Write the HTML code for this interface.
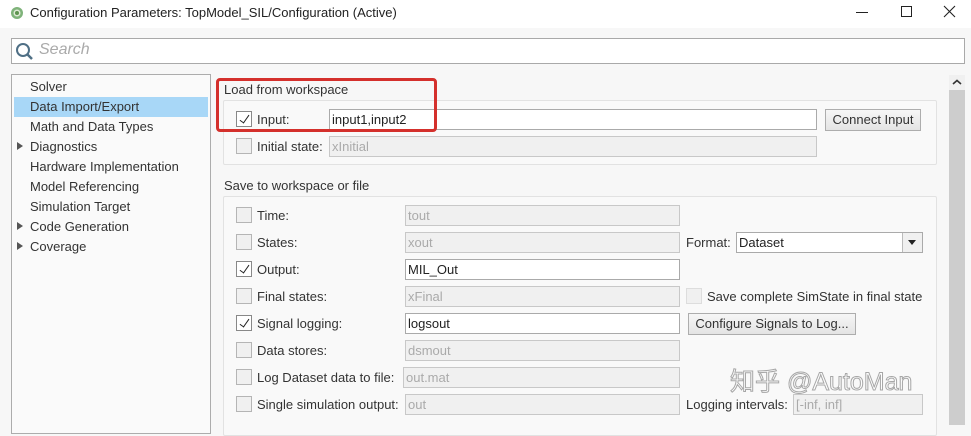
<!DOCTYPE html>
<html><head><meta charset="utf-8"><style>
*{box-sizing:border-box;margin:0;padding:0}
body{width:971px;height:422px;overflow:hidden;background:#f7f7f7;font-family:"Liberation Sans","Noto Sans CJK SC",sans-serif;font-size:13px;color:#333;position:relative}
.a{position:absolute;white-space:nowrap}
.t{position:absolute;white-space:nowrap;line-height:16px}
.cb{position:absolute;width:16px;height:16px;border:1px solid #b5b5b5;background:#f0f0f0}
.cb.on{background:#fff;border-color:#888}
.cb.on:after{content:"";position:absolute;left:5px;top:1px;width:4px;height:9px;border:solid #222;border-width:0 1.5px 1.5px 0;transform:rotate(35deg)}
.f{position:absolute;height:21px;border:1px solid #c8c8c8;background:#f0f0f0;color:#aaa;padding:2px 2px;line-height:15px}
.f.on{background:#fff;border-color:#aaa;color:#222}
.btn{position:absolute;height:22px;border:1px solid #adadad;background:linear-gradient(#f6f6f6,#e4e4e4);line-height:20px;text-align:center;color:#333}
.grp{position:absolute;border:1px solid #e2e2e2;border-radius:2px;background:#f9f9f9}
.li{position:absolute;left:30px;line-height:16px}
.ar{position:absolute;left:17px;width:0;height:0;border-left:6px solid #555;border-top:4px solid transparent;border-bottom:4px solid transparent}
</style></head><body>
<div class="a" style="left:0;top:0;width:971px;height:28px;background:#fff"></div>
<svg class="a" style="left:10px;top:6px" width="14" height="14" viewBox="0 0 14 14"><circle cx="7" cy="7" r="6" fill="#7fb37a"/><circle cx="7" cy="7" r="3.5" fill="#dfe9d6"/><circle cx="7" cy="7" r="2" fill="#5e944f"/></svg>
<div class="t" style="left:30px;top:5px;font-size:13px;color:#222">Configuration Parameters: TopModel_SIL/Configuration (Active)</div>
<div class="a" style="left:856px;top:12px;width:12px;height:1px;background:#222"></div>
<div class="a" style="left:901px;top:6px;width:11px;height:11px;border:1px solid #222"></div>
<svg class="a" style="left:943px;top:5px" width="13" height="13"><path d="M1 1L12 12M12 1L1 12" stroke="#222" stroke-width="1.1"/></svg>

<div class="a" style="left:11px;top:38px;width:954px;height:26px;border:1px solid #a9a9a9;background:#fff"></div>
<svg class="a" style="left:15px;top:42px" width="20" height="20"><circle cx="8" cy="8" r="6" fill="none" stroke="#4f6f85" stroke-width="2"/><path d="M12.5 12.5L17 17" stroke="#4f6f85" stroke-width="2.5"/></svg>
<div class="t" style="left:39px;top:41px;font-size:16px;font-style:italic;color:#aaa;line-height:18px">Search</div>

<div class="a" style="left:11px;top:74px;width:200px;height:360px;border:1px solid #acacac;background:#fafafa"></div>
<div class="a" style="left:14px;top:97px;width:194px;height:20px;background:#a8d7f7"></div>
<div class="li" style="top:79px">Solver</div>
<div class="li" style="top:99px">Data Import/Export</div>
<div class="li" style="top:119px">Math and Data Types</div>
<div class="ar" style="top:142px"></div><div class="li" style="top:139px">Diagnostics</div>
<div class="li" style="top:159px">Hardware Implementation</div>
<div class="li" style="top:179px">Model Referencing</div>
<div class="li" style="top:199px">Simulation Target</div>
<div class="ar" style="top:222px"></div><div class="li" style="top:219px">Code Generation</div>
<div class="ar" style="top:242px"></div><div class="li" style="top:239px">Coverage</div>

<div class="a" style="left:949px;top:75px;width:16px;height:350px;background:#cdcdcd"></div>
<div class="a" style="left:949px;top:75px;width:16px;height:15px;background:#f0f0f0"></div>
<svg class="a" style="left:952px;top:79px" width="10" height="7"><path d="M1 5L5 1.5L9 5" stroke="#333" stroke-width="1.6" fill="none"/></svg>

<div class="t" style="left:224px;top:82px">Load from workspace</div>
<div class="grp" style="left:223px;top:100px;width:714px;height:65px"></div>
<div class="cb on" style="left:236px;top:111px"></div><div class="t" style="left:257px;top:112px">Input:</div>
<div class="f on" style="left:329px;top:109px;width:488px">input1,input2</div>
<div class="btn" style="left:825px;top:109px;width:96px">Connect Input</div>
<div class="cb" style="left:236px;top:138px"></div><div class="t" style="left:257px;top:139px">Initial state:</div>
<div class="f" style="left:329px;top:136px;width:488px">xInitial</div>
<div class="a" style="left:216px;top:78px;width:221px;height:54px;border:3px solid #d4302c;border-radius:4px"></div>

<div class="t" style="left:224px;top:178px">Save to workspace or file</div>
<div class="grp" style="left:223px;top:196px;width:714px;height:240px"></div>

<div class="cb" style="left:236px;top:207px"></div><div class="t" style="left:257px;top:208px">Time:</div><div class="f" style="left:405px;top:205px;width:275px">tout</div>
<div class="cb" style="left:236px;top:234px"></div><div class="t" style="left:257px;top:235px">States:</div><div class="f" style="left:405px;top:232px;width:275px">xout</div>
<div class="cb on" style="left:236px;top:261px"></div><div class="t" style="left:257px;top:262px">Output:</div><div class="f on" style="left:405px;top:259px;width:275px">MIL_Out</div>
<div class="cb" style="left:236px;top:288px"></div><div class="t" style="left:257px;top:289px">Final states:</div><div class="f" style="left:405px;top:286px;width:275px">xFinal</div>
<div class="cb on" style="left:236px;top:315px"></div><div class="t" style="left:257px;top:316px">Signal logging:</div><div class="f on" style="left:405px;top:313px;width:275px">logsout</div>
<div class="cb" style="left:236px;top:342px"></div><div class="t" style="left:257px;top:343px">Data stores:</div><div class="f" style="left:405px;top:340px;width:275px">dsmout</div>
<div class="cb" style="left:236px;top:369px"></div><div class="t" style="left:257px;top:370px">Log Dataset data to file:</div><div class="f" style="left:403px;top:367px;width:277px">out.mat</div>
<div class="cb" style="left:236px;top:396px"></div><div class="t" style="left:257px;top:397px">Single simulation output:</div><div class="f" style="left:405px;top:394px;width:275px">out</div>

<div class="t" style="left:686px;top:235px">Format:</div>
<div class="f on" style="left:736px;top:232px;width:187px">Dataset</div>
<div class="a" style="left:902px;top:233px;width:20px;height:19px;border-left:1px solid #bbb;background:#f0f0f0"></div>
<div class="a" style="left:908px;top:240px;border-top:5px solid #222;border-left:4px solid transparent;border-right:4px solid transparent"></div>
<div class="cb" style="left:686px;top:288px;border-color:#ddd"></div><div class="t" style="left:707px;top:289px">Save complete SimState in final state</div>
<div class="btn" style="left:688px;top:313px;width:168px">Configure Signals to Log...</div>
<div class="t" style="left:730px;top:368px;font-size:25px;line-height:28px;color:#fff;-webkit-text-stroke:1px #999;opacity:.85">知乎 @AutoMan</div>
<div class="t" style="left:686px;top:397px">Logging intervals:</div>
<div class="f" style="left:793px;top:394px;width:130px">[-inf, inf]</div>
</body></html>
